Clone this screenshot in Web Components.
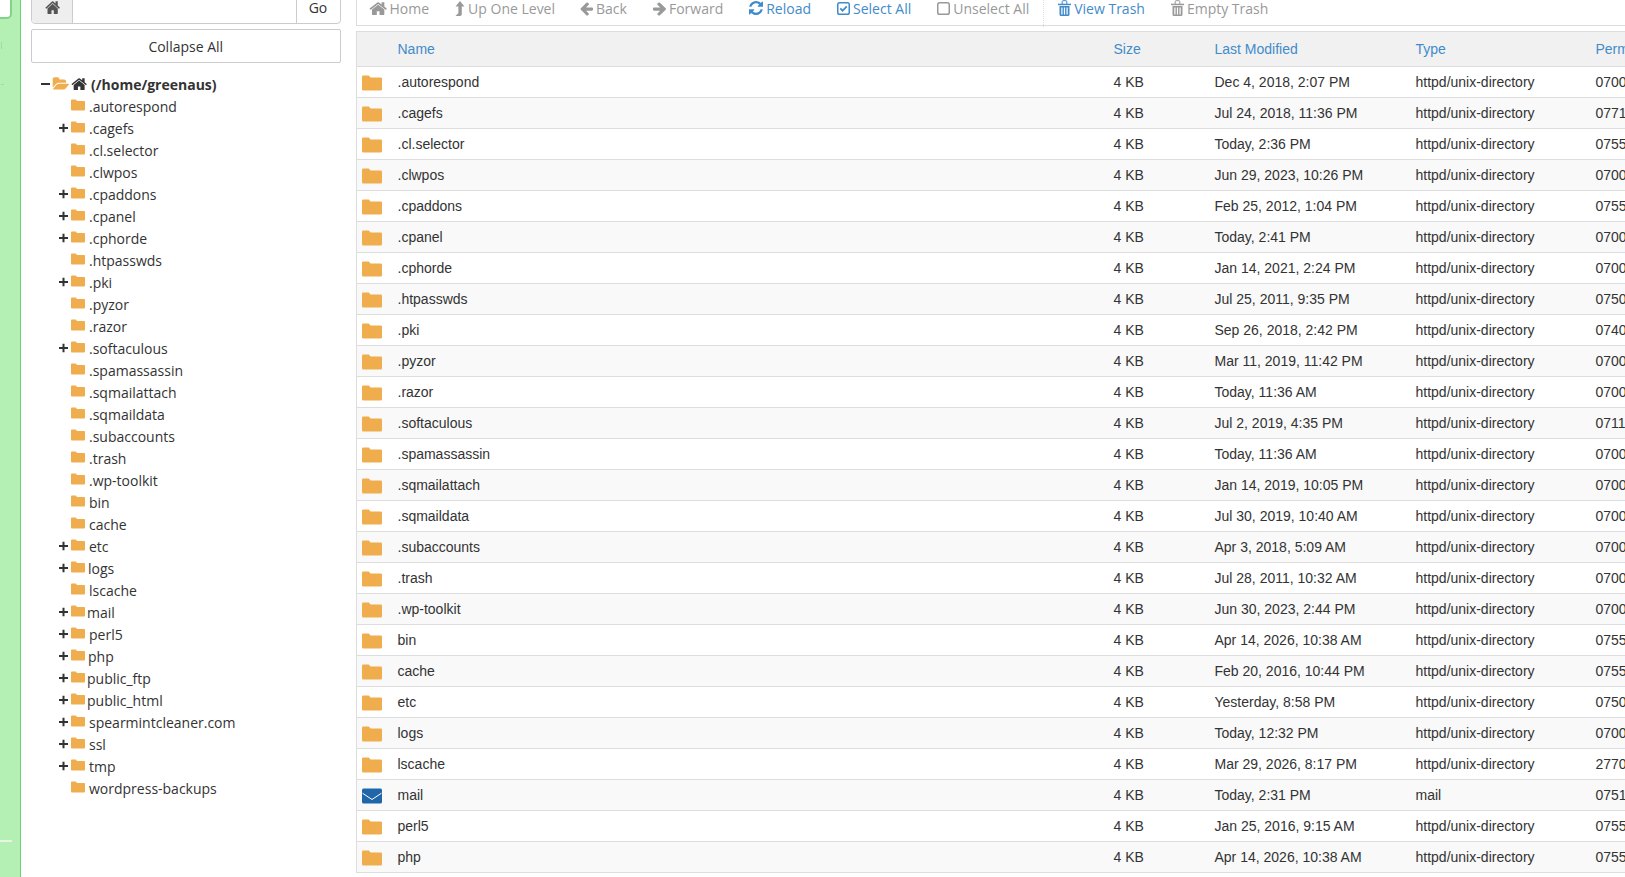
<!DOCTYPE html>
<html lang="en">
<head>
<meta charset="utf-8">
<title>File Manager</title>
<style>
    html, body { margin: 0; height: 877px; overflow: hidden; background: #fff; }
    body { display: flex; font-family: "Open Sans", sans-serif; font-size: 14px; color: #333; }
</style>
</head>
<body>
    <fm-rail></fm-rail>
    <fm-sidebar>
        <fm-tree-node root open icon="home">(/home/greenaus)</fm-tree-node>
        <fm-tree-node>.autorespond</fm-tree-node>
        <fm-tree-node more>.cagefs</fm-tree-node>
        <fm-tree-node>.cl.selector</fm-tree-node>
        <fm-tree-node>.clwpos</fm-tree-node>
        <fm-tree-node more>.cpaddons</fm-tree-node>
        <fm-tree-node more>.cpanel</fm-tree-node>
        <fm-tree-node more>.cphorde</fm-tree-node>
        <fm-tree-node>.htpasswds</fm-tree-node>
        <fm-tree-node more>.pki</fm-tree-node>
        <fm-tree-node>.pyzor</fm-tree-node>
        <fm-tree-node>.razor</fm-tree-node>
        <fm-tree-node more>.softaculous</fm-tree-node>
        <fm-tree-node>.spamassassin</fm-tree-node>
        <fm-tree-node>.sqmailattach</fm-tree-node>
        <fm-tree-node>.sqmaildata</fm-tree-node>
        <fm-tree-node>.subaccounts</fm-tree-node>
        <fm-tree-node>.trash</fm-tree-node>
        <fm-tree-node>.wp-toolkit</fm-tree-node>
        <fm-tree-node>bin</fm-tree-node>
        <fm-tree-node>cache</fm-tree-node>
        <fm-tree-node more>etc</fm-tree-node>
        <fm-tree-node more nudge="1">logs</fm-tree-node>
        <fm-tree-node>lscache</fm-tree-node>
        <fm-tree-node more nudge="2">mail</fm-tree-node>
        <fm-tree-node more>perl5</fm-tree-node>
        <fm-tree-node more nudge="1">php</fm-tree-node>
        <fm-tree-node more nudge="2">public_ftp</fm-tree-node>
        <fm-tree-node more nudge="2">public_html</fm-tree-node>
        <fm-tree-node more>spearmintcleaner.com</fm-tree-node>
        <fm-tree-node more>ssl</fm-tree-node>
        <fm-tree-node more>tmp</fm-tree-node>
        <fm-tree-node>wordpress-backups</fm-tree-node>
    </fm-sidebar>
    <fm-main>
        <fm-toolbar>
            <fm-tool icon="home" w="18" h="13">Home</fm-tool>
            <fm-tool icon="up" w="10" h="15" tight>Up One Level</fm-tool>
            <fm-tool icon="left" w="13" h="11">Back</fm-tool>
            <fm-tool icon="right" w="13" h="11">Forward</fm-tool>
            <fm-tool icon="reload" w="14" h="14" active>Reload</fm-tool>
            <fm-tool icon="checked" w="13" h="13" active>Select All</fm-tool>
            <fm-tool icon="box" w="13" h="13">Unselect All</fm-tool>
            <fm-tool icon="trash" w="13" h="16" active divided>View Trash</fm-tool>
            <fm-tool icon="trash" w="13" h="16">Empty Trash</fm-tool>
        </fm-toolbar>
        <fm-table></fm-table>
    </fm-main>

<script>
    // glyphs share one renderer; viewBoxes are cropped tight so w/h set the real drawn size
    const GLYPHS = {
        home: ["40 230 1680 1310", '<path d="M1472 992v480q0 26-19 45t-45 19h-384v-384h-256v384h-384q-26 0-45-19t-19-45v-480q0-1 .5-3t.5-3l575-474 575 474q1 2 1 6zm223-69l-62 74q-8 9-21 11h-3q-13 0-21-7l-692-577-692 577q-12 8-24 7-13-2-21-11l-62-74q-8-10-7-23.500t11-21.500l719-599q32-26 76-26t76 26l244 204v-195q0-14 9-23t23-9h192q14 0 23 9t9 23v408l219 182q10 8 11 21.500t-7 23.500z"/>'],
        up: ["0 0 10 15", '<path d="M5 0 L9.500 5.500 H6.800 V13.300 Q6.800 15 5 15 H.5 L3 12.500 H3.400 V5.500 H.5 Z"/>'],
        left: ["128 250 1536 1292", '<path d="M1664 896v128q0 53-32.500 90.500t-84.500 37.500h-704l293 294q38 36 38 90t-38 90l-75 76q-37 37-90 37-52 0-91-37l-651-652q-37-37-37-90 0-52 37-91l651-650q38-38 91-38 52 0 90 38l75 74q38 38 38 91t-38 91l-293 293h704q52 0 84.500 37.500t32.500 90.500z"/>'],
        right: ["128 250 1472 1292", '<path d="M1600 960q0 54-37 91l-651 651q-39 37-91 37-51 0-90-37l-75-75q-38-38-38-91t38-91l293-293h-704q-52 0-84.500-37.500t-32.500-90.500v-128q0-53 32.500-90.500t84.500-37.500h704l-293-294q-38-36-38-90t38-90l75-75q38-38 90-38 53 0 91 38l651 651q37 35 37 90z"/>'],
        reload: ["128 128 1536 1536", '<path d="M1639 1056q0 5-1 7-64 268-268 434.500t-478 166.500q-146 0-282.500-55t-243.500-157l-129 129q-19 19-45 19t-45-19-19-45v-448q0-26 19-45t45-19h448q26 0 45 19t19 45-19 45l-137 137q71 66 161 102t187 36q134 0 250-65t186-179q11-17 53-117 8-23 30-23h192q13 0 22.500 9.500t9.500 22.500zm25-800v448q0 26-19 45t-45 19h-448q-26 0-45-19t-19-45 19-45l138-138q-148-137-349-137-134 0-250 65t-186 179q-11 17-53 117-8 23-30 23h-199q-13 0-22.500-9.500t-9.500-22.500v-7q65-268 270-434.500t480-166.500q146 0 284 55.500t245 156.500l130-129q19-19 45-19t45 19 19 45z"/>'],
        checked: ["0 0 13 13", '<rect x=".75" y=".75" width="11.500" height="11.500" rx="1.800" fill="none" stroke="currentColor" stroke-width="1.500"/><path d="M3.300 6.300 L5.600 8.700 L9.800 4.300" fill="none" stroke="currentColor" stroke-width="1.700"/>'],
        box: ["0 0 13 13", '<rect x=".75" y=".75" width="11.500" height="11.500" rx="1.800" fill="none" stroke="currentColor" stroke-width="1.500"/>'],
        trash: ["0 0 13 16", '<path d="M4.200 4 V1.600 Q4.200 .7 5 .7 H8 Q8.800 .7 8.800 1.600 V4" fill="none" stroke="currentColor"/><rect y="3.700" width="13" height="1.500"/><path fill-rule="evenodd" d="M1.500 6 H11.500 V14.500 Q11.500 16 10 16 H3 Q1.500 16 1.500 14.500 Z M3.300 7.500 V14.500 H4.500 V7.500 Z M5.900 7.500 V14.500 H7.100 V7.500 Z M8.500 7.500 V14.500 H9.700 V7.500 Z"/>'],
        folder: ["0 0 20 15", '<path d="M1.200 0 H6.800 L8.600 2 H18.800 Q20 2 20 3.200 V13.800 Q20 15 18.800 15 H1.200 Q0 15 0 13.800 V1.200 Q0 0 1.200 0 Z"/>'],
        open: ["0 190 1845 1410", '<path d="M1845 931q0 35-53 93l-336 396q-43 51-120.500 86.500t-143.500 35.500h-1088q-34 0-60.500-13t-26.500-43q0-35 53-93l336-396q43-51 120.500-86.500t143.500-35.500h1088q34 0 60.500 13t26.500 43zm-343-344v160h-832q-94 0-197 47.500t-164 119.500l-337 396-5 6q0-4-.5-12.500t-.5-12.500v-960q0-92 66-158t158-66h320q92 0 158 66t66 158v32h544q92 0 158 66t66 158z"/>'],
        mail: ["0 0 20 15", '<rect width="20" height="15" rx="1.500"/><path d="M.5 4.700 L10 11 L19.500 4.700" fill="none" stroke="#fff" stroke-width="1"/>']
    };

    class FmIcon extends HTMLElement {
        connectedCallback() {
            const [box, body] = GLYPHS[this.getAttribute("name")];
            const w = this.getAttribute("w"), h = this.getAttribute("h");
            this.attachShadow({ mode: "open" }).innerHTML = `
                <style>
                    :host { display: block; flex: none; width: ${w}px; height: ${h}px; }
                    svg { display: block; width: 100%; height: 100%; fill: currentColor; overflow: visible; }
                </style>
                <svg viewBox="${box}" preserveAspectRatio="none">${body}</svg>`;
        }
    }
    customElements.define("fm-icon", FmIcon);

    // left green strip of the host page, mostly cut off by the frame
    class FmRail extends HTMLElement {
        constructor() {
            super();
            this.attachShadow({ mode: "open" }).innerHTML = `
                <style>
                    :host { display: block; flex: none; position: relative; width: 20px; height: 877px;
                            box-sizing: content-box; background: #b4efb3; border-right: 1.5px solid #6ccf73; }
                    .card { position: absolute; left: -6px; top: -6px; width: 14px; height: 21px;
                            background: #fff; border: 2px solid #7fd585; border-radius: 5px; }
                    .rule { position: absolute; left: 0; top: 840px; width: 12px; height: 2px; background: #e4f5e2; }
                    .tick { position: absolute; left: 1px; background: #a0dba1; }
                    .t1 { top: 42px; width: 1px; height: 7px; }
                    .t2 { top: 84px; width: 3px; height: 1px; }
                </style>
                <div class="card"></div>
                <div class="tick t1"></div>
                <div class="tick t2"></div>
                <div class="rule"></div>`;
        }
    }
    customElements.define("fm-rail", FmRail);

    class FmSidebar extends HTMLElement {
        constructor() {
            super();
            this.attachShadow({ mode: "open" }).innerHTML = `
                <style>
                    :host { display: block; flex: none; box-sizing: border-box; width: 334.500px; padding: 0 15px 0 10px; }
                    .search { display: flex; height: 34px; margin-top: -10px; box-sizing: border-box;
                              border: 1px solid #ccc; border-radius: 4px; }
                    .addon { display: flex; align-items: center; justify-content: center; width: 40px;
                             background: #eee; border-right: 1px solid #ccc; color: #555; border-radius: 3px 0 0 3px; }
                    .field { flex: 1; min-width: 0; }
                    .go { display: flex; align-items: center; justify-content: center; width: 43px;
                          border-left: 1px solid #ccc; color: #333; font-size: 14px; }
                    button { display: block; width: 100%; height: 34px; margin-top: 5px; padding: 0;
                             background: #fff; border: 1px solid #ccc; border-radius: 2px;
                             font: inherit; color: #333; }
                    .tree { padding-top: 10px; }
                </style>
                <div class="search">
                    <div class="addon"><fm-icon name="home" w="15" h="13"></fm-icon></div>
                    <div class="field"></div>
                    <div class="go">Go</div>
                </div>
                <button type="button">Collapse All</button>
                <div class="tree"><slot></slot></div>`;
        }
    }
    customElements.define("fm-sidebar", FmSidebar);

    class FmTreeNode extends HTMLElement {
        connectedCallback() {
            const root = this.hasAttribute("root"), more = this.hasAttribute("more");
            const nudge = this.getAttribute("nudge") || 0;
            let sign = "";
            if (root) sign = '<svg class="sign" width="9" height="9" style="margin-left:10px"><rect y="3.500" width="9" height="2"/></svg>';
            if (more) sign = '<svg class="sign" width="9" height="9" style="margin-left:28px"><rect y="3.500" width="9" height="2"/><rect x="3.500" width="2" height="9"/></svg>';
            const lead = root
                ? `<fm-icon class="fold" name="open" w="16" h="12" style="margin:0 2px 0 3px"></fm-icon>
                   <fm-icon name="home" w="16" h="12" style="margin-right:4px;color:#333"></fm-icon>`
                : `<fm-icon class="fold" name="folder" w="14" h="11" style="margin-left:${more ? 3 : 40}px;margin-right:${4 - nudge}px;transform:translateY(-1.500px)"></fm-icon>`;
            this.attachShadow({ mode: "open" }).innerHTML = `
                <style>
                    :host { display: block; }
                    .row { display: flex; align-items: center; height: 22px; white-space: nowrap; color: #333; }
                    :host([root]) .row { font-weight: 700; }
                    .sign { flex: none; fill: #333; transform: translateY(-.5px); }
                    .fold { color: #f0ad4e; }
                </style>
                <div class="row">${sign}${lead}<span><slot></slot></span></div>`;
        }
    }
    customElements.define("fm-tree-node", FmTreeNode);

    class FmMain extends HTMLElement {
        constructor() {
            super();
            this.attachShadow({ mode: "open" }).innerHTML = `
                <style>
                    :host { display: block; flex: 1; min-width: 0; overflow: hidden; margin-top: -8px; height: 885px; }
                </style>
                <slot></slot>`;
        }
    }
    customElements.define("fm-main", FmMain);

    class FmToolbar extends HTMLElement {
        constructor() {
            super();
            this.attachShadow({ mode: "open" }).innerHTML = `
                <style>
                    :host { display: flex; align-items: center; box-sizing: border-box; height: 34px;
                            padding: 0 0 1px 12px; gap: 26px; margin-bottom: 5px;
                            border-left: 1px solid #ddd; border-bottom: 1px solid #ddd; }
                </style>
                <slot></slot>`;
        }
    }
    customElements.define("fm-toolbar", FmToolbar);

    class FmTool extends HTMLElement {
        connectedCallback() {
            const name = this.getAttribute("icon");
            const w = this.getAttribute("w"), h = this.getAttribute("h");
            this.attachShadow({ mode: "open" }).innerHTML = `
                <style>
                    :host { display: flex; align-items: center; gap: 3px; position: relative; white-space: nowrap; color: #999; }
                    :host([active]) { color: #428bca; }
                    :host([tight]) { margin-right: -1px; }
                    :host([divided]) { margin-left: 3px; }
                    :host([divided])::before { content: ""; position: absolute; left: -15px; top: 0; bottom: -9px;
                            border-left: 1px dotted #ddd; }
                </style>
                <fm-icon name="${name}" w="${w}" h="${h}"></fm-icon><slot></slot>`;
        }
    }
    customElements.define("fm-tool", FmTool);

    const COLUMNS = "41px 716px 101px 201px 180px 200px";

    class FmRow extends HTMLElement {
        connectedCallback() {
            const a = n => this.getAttribute(n);
            const mail = a("kind") === "mail";
            this.attachShadow({ mode: "open" }).innerHTML = `
                <style>
                    :host { display: grid; grid-template-columns: ${COLUMNS}; align-items: center; height: 31px;
                            box-sizing: border-box; border-bottom: 1px solid #ddd; width: 1439px;
                            font: 14px "Liberation Sans", Arial, sans-serif; color: #333; white-space: nowrap; }
                    :host(:nth-child(even)) { background: #f9f9f9; }
                    .ico { padding-left: 5px; transform: translateY(.5px); color: ${mail ? "#2166a8" : "#f0ad4e"}; }
                </style>
                <div class="ico"><fm-icon name="${mail ? "mail" : "folder"}" w="20" h="15"></fm-icon></div>
                <div>${a("name")}</div>
                <div>4 KB</div>
                <div>${a("date")}</div>
                <div>${mail ? "mail" : "httpd/unix-directory"}</div>
                <div>${a("perm")}</div>`;
        }
    }
    customElements.define("fm-row", FmRow);

    const FILES = [
        [".autorespond", "Dec 4, 2018, 2:07 PM", "0700"],
        [".cagefs", "Jul 24, 2018, 11:36 PM", "0771"],
        [".cl.selector", "Today, 2:36 PM", "0755"],
        [".clwpos", "Jun 29, 2023, 10:26 PM", "0700"],
        [".cpaddons", "Feb 25, 2012, 1:04 PM", "0755"],
        [".cpanel", "Today, 2:41 PM", "0700"],
        [".cphorde", "Jan 14, 2021, 2:24 PM", "0700"],
        [".htpasswds", "Jul 25, 2011, 9:35 PM", "0750"],
        [".pki", "Sep 26, 2018, 2:42 PM", "0740"],
        [".pyzor", "Mar 11, 2019, 11:42 PM", "0700"],
        [".razor", "Today, 11:36 AM", "0700"],
        [".softaculous", "Jul 2, 2019, 4:35 PM", "0711"],
        [".spamassassin", "Today, 11:36 AM", "0700"],
        [".sqmailattach", "Jan 14, 2019, 10:05 PM", "0700"],
        [".sqmaildata", "Jul 30, 2019, 10:40 AM", "0700"],
        [".subaccounts", "Apr 3, 2018, 5:09 AM", "0700"],
        [".trash", "Jul 28, 2011, 10:32 AM", "0700"],
        [".wp-toolkit", "Jun 30, 2023, 2:44 PM", "0700"],
        ["bin", "Apr 14, 2026, 10:38 AM", "0755"],
        ["cache", "Feb 20, 2016, 10:44 PM", "0755"],
        ["etc", "Yesterday, 8:58 PM", "0750"],
        ["logs", "Today, 12:32 PM", "0700"],
        ["lscache", "Mar 29, 2026, 8:17 PM", "2770"],
        ["mail", "Today, 2:31 PM", "0751", "mail"],
        ["perl5", "Jan 25, 2016, 9:15 AM", "0755"],
        ["php", "Apr 14, 2026, 10:38 AM", "0755"]
    ];

    class FmTable extends HTMLElement {
        constructor() {
            super();
            const rows = FILES.map(([name, date, perm, kind]) =>
                `<fm-row name="${name}" date="${date}" perm="${perm}" kind="${kind || "dir"}"></fm-row>`).join("");
            this.attachShadow({ mode: "open" }).innerHTML = `
                <style>
                    :host { display: block; box-sizing: border-box; border-left: 1px solid #ddd; border-top: 1px solid #ddd; }
                    .head { display: grid; grid-template-columns: ${COLUMNS}; align-items: center; height: 35px; width: 1439px;
                            box-sizing: border-box; background: #f1f1f1; border-bottom: 1px solid #ddd;
                            font: 14px "Liberation Sans", Arial, sans-serif; color: #428bca; white-space: nowrap; }
                </style>
                <div class="head">
                    <div></div><div>Name</div><div>Size</div><div>Last Modified</div><div>Type</div><div>Permissions</div>
                </div>
                <div class="body">${rows}</div>`;
        }
    }
    customElements.define("fm-table", FmTable);
</script>
</body>
</html>
